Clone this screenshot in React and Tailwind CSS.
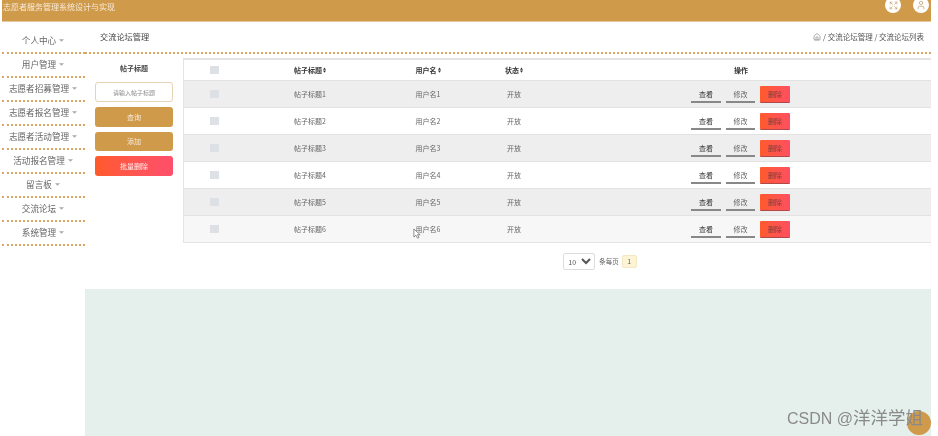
import React from 'react';
import { House, User, Expand } from 'lucide-react';

const menus = ['个人中心', '用户管理', '志愿者招募管理', '志愿者报名管理', '志愿者活动管理', '活动报名管理', '留言板', '交流论坛', '系统管理'];
const rows = [1, 2, 3, 4, 5, 6];
const rowBg = ['bg-[#eeeeee]', 'bg-white', 'bg-[#eeeeee]', 'bg-white', 'bg-[#eeeeee]', 'bg-[#f7f7f7]'];
const tableCols = 'grid grid-cols-[61px_130px_106px_66px_1fr] items-center';

const Sort = () => (
  <svg viewBox="0 0 4 7" className="inline-block w-[3px] h-[6px] ml-px align-[-0.5px]">
    <path d="M2 0 L4 3 L0 3 Z M2 7 L4 4 L0 4 Z" fill="#333" />
  </svg>
);

const Caret = () => (
  <svg viewBox="0 0 6 3" className="w-[5px] h-[3px] ml-px">
    <path d="M0 0 H6 L3 3 Z" fill="#aaa" />
  </svg>
);

const App = () => {
  return (
    <div className="relative w-[931px] h-[436px] overflow-hidden bg-white text-[#666] font-['Noto_Sans_CJK_SC','Liberation_Sans',sans-serif] blur-[0.5px]">
      <header className="ml-[2px] h-[22px] bg-[#d09a4b] flex items-start justify-between pr-[2px] border-b border-[#e6c9a0]">
        <span className="pl-px pt-[1px] text-[8px] leading-[11px] text-[#f7ead8]">志愿者服务管理系统设计与实现</span>
        <div className="flex gap-[12px] -mt-[3px]">
          <span className="w-[16px] h-[16px] rounded-full bg-white flex items-center justify-center">
            <Expand className="w-[9px] h-[9px] text-[#c9a77a]" strokeWidth={2} />
          </span>
          <span className="w-[16px] h-[16px] rounded-full bg-white flex items-center justify-center">
            <User className="w-[10px] h-[10px] text-[#c9a77a]" strokeWidth={2} />
          </span>
        </div>
      </header>

      <div className="flex h-[414px]">
        <nav className="ml-[2px] w-[83px] shrink-0 pt-[8px]">
          {menus.map((m) => (
            <div key={m} className="h-[24px] pb-[1px] flex items-center justify-center gap-[2px] pr-[1px] border-b-2 border-dotted border-[#d9a662] text-[8.6px] text-[#666]">
              {m}
              <Caret />
            </div>
          ))}
        </nav>

        <main className="flex-1 flex flex-col min-w-0">
          <div className="h-[32px] flex items-center justify-between pl-[15px] pr-[7px] pb-[1px] border-b-2 border-dotted border-[#d9a662]">
            <span className="text-[8.2px] text-[#444]">交流论坛管理</span>
            <span className="flex items-center gap-[2px] text-[7.5px] text-[#555]">
              <House className="w-[8px] h-[8px]" strokeWidth={1.5} />
              / 交流论坛管理 / 交流论坛列表
            </span>
          </div>

          <div className="flex pt-[4px] h-[235px]">
            <aside className="w-[98px] shrink-0 pt-px px-[10px] flex flex-col text-[7px]">
              <div className="h-[18px] mb-[5px] flex items-center justify-center font-bold text-[#444]">帖子标题</div>
              <div className="h-[20px] mb-[5px] flex items-center justify-center rounded-[3px] border border-[#e6d3b3] text-[6px] text-[#888]">请输入帖子标题</div>
              <button className="h-[20px] mb-[5px] rounded-[3px] bg-[#d09a4b] text-white/80">查询</button>
              <button className="h-[19px] mb-[5px] rounded-[3px] bg-[#d09a4b] text-white/80">添加</button>
              <button className="h-[20px] rounded-[3px] bg-gradient-to-r from-[#ff5a2a] to-[#ff4f6b] text-white/90">批量删除</button>
            </aside>

            <div className="flex-1 min-w-0">
              <div className="h-[185px] border-t-2 border-b-2 border-l border-[#e4e4e4] text-[7px]">
                <div className={`${tableCols} h-[20px] bg-white font-bold text-[#333]`}>
                  <span className="w-[9px] h-[8px] bg-[#dde1e6] ml-[26px]" />
                  <span className="text-center">帖子标题<Sort /></span>
                  <span className="text-center">用户名<Sort /></span>
                  <span className="text-center">状态<Sort /></span>
                  <span className="text-center pl-[4px]">操作</span>
                </div>
                {rows.map((n, i) => (
                  <div key={n} className={`${tableCols} h-[27px] border-t border-[#e2e2e2] ${rowBg[i]}`}>
                    <span className="w-[9px] h-[8px] bg-[#dde1e6] ml-[26px]" />
                    <span className="text-center">帖子标题{n}</span>
                    <span className="text-center">用户名{n}</span>
                    <span className="text-center">开放</span>
                    <div className="flex items-center gap-[5px] pl-[144px] pt-[1px]">
                      <span className="w-[30px] h-[16px] mt-[1px] flex items-center justify-center border-b-2 border-[#888] text-[#333]">查看</span>
                      <span className="w-[29px] h-[16px] mt-[1px] flex items-center justify-center border-b-2 border-[#888]">修改</span>
                      <span className="w-[30px] h-[17px] flex items-center justify-center rounded-[1px] bg-gradient-to-r from-[#ff5a2a] to-[#ff4f60] border-b border-[#b04a4a] text-[#7a3a3a]">删除</span>
                    </div>
                  </div>
                ))}
              </div>

              <div className="mt-[10px] flex items-center justify-center pl-[86px] text-[6.5px]">
                <select className="w-[32px] h-[17px] mr-[4px] rounded-[2px] border border-[#ddd] bg-white text-[7px] text-[#555]">
                  <option>10</option>
                </select>
                <span className="mr-[3px]">条每页</span>
                <span className="w-[15px] h-[13px] flex items-center justify-center rounded-[2px] bg-[#fdf3d5] border border-[#f3e7c4] text-[7px]">1</span>
              </div>
            </div>
          </div>

          <div className="flex-1 bg-[#e5f0ec]" />
        </main>
      </div>

      <svg viewBox="0 0 9 12" className="absolute left-[413px] top-[228px] w-[8px] h-[11px]">
        <path d="M1 1 L1 10 L3.3 8 L5.2 11.3 L6.8 10.4 L5 7.4 L8 7.4 Z" fill="#fff" stroke="#666" strokeWidth="0.8" />
      </svg>
      <span className="absolute left-[907px] top-[411px] w-[24px] h-[24px] rounded-full bg-[#d09a4b]" />
      <span className="absolute left-[787px] top-[407px] text-[16px] leading-[22px] text-[#8a8a8a] whitespace-nowrap font-['Liberation_Sans','Noto_Sans_CJK_SC',sans-serif]">
        CSDN @<span className="text-[17.5px]">洋洋学姐</span>
      </span>
    </div>
  );
};

export default App;
